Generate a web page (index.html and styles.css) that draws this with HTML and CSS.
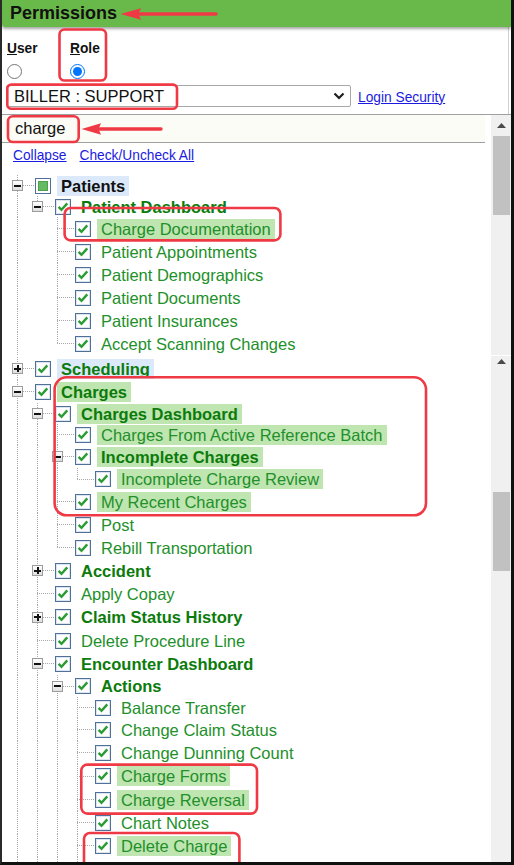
FILE: index.html
```html
<!DOCTYPE html>
<html lang="en">
<head>
<meta charset="utf-8">
<title>Permissions</title>
<link rel="stylesheet" href="styles.css">
</head>
<body>
<svg class="defs" width="0" height="0" aria-hidden="true">
  <defs>
    <symbol id="cb" viewBox="0 0 16 16">
      <rect x=".5" y=".5" width="15" height="15" fill="#fff" stroke="#4f7099"/>
      <rect x="1.5" y="1.5" width="13" height="13" fill="none" stroke="#dbe4ef"/>
      <path d="M3.6 7.8l2.9 3 5.8-6.4" fill="none" stroke="#2a9c33" stroke-width="2.4"/>
    </symbol>
    <symbol id="cbp" viewBox="0 0 16 16">
      <rect x=".5" y=".5" width="15" height="15" fill="#fff" stroke="#4f7099"/>
      <rect x="3.5" y="3.5" width="9" height="9" fill="#64bb62" stroke="#4f9f4f"/>
    </symbol>
  </defs>
</svg>

<div class="frame">
  <header class="title">Permissions</header>

  <div class="top">
    <div class="modes">
      <label class="mode"><span><u>U</u>ser</span><input type="radio" name="mode"></label>
      <label class="mode"><span><u>R</u>ole</span><input type="radio" name="mode" checked></label>
    </div>
    <div class="role-row">
      <div class="select"><span>BILLER : SUPPORT</span><svg class="chev" viewBox="0 0 12 8"><path d="M1.5 1.5L6 6l4.5-4.5" fill="none" stroke="#1e1e1e" stroke-width="2.2"/></svg></div>
      <a class="link login" href="#">Login Security</a>
    </div>
  </div>

  <section class="panel panel-top">
    <div class="panel-body">
      <div class="search">charge</div>
      <div class="links"><a class="link" href="#">Collapse</a><a class="link" href="#">Check/Uncheck All</a></div>
      <ul class="tree">
        <li class="row h21"><span class="c tee"><span class="exp minus"></span></span><svg class="cb"><use href="#cbp"/></svg><span class="lbl b root blue">Patients</span></li>
        <li class="row h21"><span class="g v"></span><span class="c end"><span class="exp minus"></span></span><svg class="cb"><use href="#cb"/></svg><span class="lbl b">Patient Dashboard</span></li>
        <li class="row"><span class="g v"></span><span class="g"></span><span class="c tee"></span><svg class="cb"><use href="#cb"/></svg><span class="lbl hl">Charge Documentation</span></li>
        <li class="row"><span class="g v"></span><span class="g"></span><span class="c tee"></span><svg class="cb"><use href="#cb"/></svg><span class="lbl">Patient Appointments</span></li>
        <li class="row"><span class="g v"></span><span class="g"></span><span class="c tee"></span><svg class="cb"><use href="#cb"/></svg><span class="lbl">Patient Demographics</span></li>
        <li class="row"><span class="g v"></span><span class="g"></span><span class="c tee"></span><svg class="cb"><use href="#cb"/></svg><span class="lbl">Patient Documents</span></li>
        <li class="row"><span class="g v"></span><span class="g"></span><span class="c tee"></span><svg class="cb"><use href="#cb"/></svg><span class="lbl">Patient Insurances</span></li>
        <li class="row"><span class="g v"></span><span class="g"></span><span class="c end"></span><svg class="cb"><use href="#cb"/></svg><span class="lbl">Accept Scanning Changes</span></li>
      </ul>
    </div>
    <div class="scrollbar">
      <div class="sb-btn"><svg class="sb-arrow" viewBox="0 0 9 5"><path d="M0 5L4.5 0 9 5z"/></svg></div>
      <div class="sb-thumb"></div>
    </div>
  </section>

  <section class="panel panel-bottom">
    <div class="panel-body">
      <ul class="tree">
        <li class="row"><span class="c tee"><span class="exp plus"></span></span><svg class="cb"><use href="#cb"/></svg><span class="lbl b blue">Scheduling</span></li>
        <li class="row"><span class="c tee"><span class="exp minus"></span></span><svg class="cb"><use href="#cb"/></svg><span class="lbl b hl">Charges</span></li>
        <li class="row h21"><span class="g v"></span><span class="c tee"><span class="exp minus"></span></span><svg class="cb"><use href="#cb"/></svg><span class="lbl b hl">Charges Dashboard</span></li>
        <li class="row h21"><span class="g v"></span><span class="g v"></span><span class="c tee"></span><svg class="cb"><use href="#cb"/></svg><span class="lbl hl">Charges From Active Reference Batch</span></li>
        <li class="row"><span class="g v"></span><span class="g v"></span><span class="c tee"><span class="exp minus"></span></span><svg class="cb"><use href="#cb"/></svg><span class="lbl b hl">Incomplete Charges</span></li>
        <li class="row h22"><span class="g v"></span><span class="g v"></span><span class="g v"></span><span class="c end"></span><svg class="cb"><use href="#cb"/></svg><span class="lbl hl">Incomplete Charge Review</span></li>
        <li class="row"><span class="g v"></span><span class="g v"></span><span class="c tee"></span><svg class="cb"><use href="#cb"/></svg><span class="lbl hl">My Recent Charges</span></li>
        <li class="row"><span class="g v"></span><span class="g v"></span><span class="c tee"></span><svg class="cb"><use href="#cb"/></svg><span class="lbl">Post</span></li>
        <li class="row"><span class="g v"></span><span class="g v"></span><span class="c end"></span><svg class="cb"><use href="#cb"/></svg><span class="lbl">Rebill Transportation</span></li>
        <li class="row"><span class="g v"></span><span class="c tee"><span class="exp plus"></span></span><svg class="cb"><use href="#cb"/></svg><span class="lbl b">Accident</span></li>
        <li class="row"><span class="g v"></span><span class="c tee"></span><svg class="cb"><use href="#cb"/></svg><span class="lbl">Apply Copay</span></li>
        <li class="row h24"><span class="g v"></span><span class="c tee"><span class="exp plus"></span></span><svg class="cb"><use href="#cb"/></svg><span class="lbl b">Claim Status History</span></li>
        <li class="row"><span class="g v"></span><span class="c tee"></span><svg class="cb"><use href="#cb"/></svg><span class="lbl">Delete Procedure Line</span></li>
        <li class="row"><span class="g v"></span><span class="c tee"><span class="exp minus"></span></span><svg class="cb"><use href="#cb"/></svg><span class="lbl b">Encounter Dashboard</span></li>
        <li class="row h22"><span class="g v"></span><span class="g v"></span><span class="c tee"><span class="exp minus"></span></span><svg class="cb"><use href="#cb"/></svg><span class="lbl b">Actions</span></li>
        <li class="row h21"><span class="g v"></span><span class="g v"></span><span class="g v"></span><span class="c tee"></span><svg class="cb"><use href="#cb"/></svg><span class="lbl">Balance Transfer</span></li>
        <li class="row"><span class="g v"></span><span class="g v"></span><span class="g v"></span><span class="c tee"></span><svg class="cb"><use href="#cb"/></svg><span class="lbl">Change Claim Status</span></li>
        <li class="row"><span class="g v"></span><span class="g v"></span><span class="g v"></span><span class="c tee"></span><svg class="cb"><use href="#cb"/></svg><span class="lbl">Change Dunning Count</span></li>
        <li class="row h24"><span class="g v"></span><span class="g v"></span><span class="g v"></span><span class="c tee"></span><svg class="cb"><use href="#cb"/></svg><span class="lbl hl">Charge Forms</span></li>
        <li class="row"><span class="g v"></span><span class="g v"></span><span class="g v"></span><span class="c tee"></span><svg class="cb"><use href="#cb"/></svg><span class="lbl hl">Charge Reversal</span></li>
        <li class="row"><span class="g v"></span><span class="g v"></span><span class="g v"></span><span class="c tee"></span><svg class="cb"><use href="#cb"/></svg><span class="lbl">Chart Notes</span></li>
        <li class="row"><span class="g v"></span><span class="g v"></span><span class="g v"></span><span class="c tee"></span><svg class="cb"><use href="#cb"/></svg><span class="lbl hl">Delete Charge</span></li>
        <li class="row"><span class="g v"></span><span class="g v"></span><span class="g v"></span><span class="g v"></span></li>
      </ul>
    </div>
    <div class="scrollbar scrollbar-bottom">
      <div class="sb-btn cut"><svg class="sb-arrow" viewBox="0 0 9 5"><path d="M0 5L4.5 0 9 5z"/></svg></div>
      <div class="sb-thumb low"></div>
    </div>
  </section>

  <svg class="annotations" viewBox="0 0 514 865" aria-hidden="true">
    <g fill="none" stroke="#ef3a45" stroke-width="2.6">
      <rect x="59.5" y="29.5" width="46.5" height="51" rx="5"/>
      <rect x="7.3" y="84.6" width="169.7" height="24.2" rx="4"/>
      <rect x="8" y="116.3" width="70.7" height="25.7" rx="5"/>
      <rect x="64.6" y="208" width="215.8" height="32.4" rx="6"/>
      <rect x="54.6" y="377.3" width="371.4" height="138" rx="12"/>
      <rect x="81.3" y="764.6" width="175.7" height="49" rx="6"/>
      <rect x="84" y="833" width="155.4" height="34" rx="6"/>
      <line x1="137" y1="14" x2="216" y2="14" stroke-width="3.4" stroke-linecap="round"/>
      <line x1="97" y1="129" x2="161" y2="129" stroke-width="3.4" stroke-linecap="round"/>
    </g>
    <g fill="#ef3a45">
      <path d="M120.5 14L141 8.3 138.5 14 141 19.7z"/>
      <path d="M81.5 129L101 123.3 98.5 129 101 134.7z"/>
    </g>
  </svg>
</div>
</body>
</html>
```

FILE: styles.css
```css
* { box-sizing: border-box; }

html, body {
  margin: 0;
  background: #fff;
}

body {
  font-family: "Liberation Sans", Arial, sans-serif;
  color: #111;
}

.defs {
  position: absolute;
  width: 0;
  height: 0;
  overflow: hidden;
}

.frame {
  position: relative;
  width: 514px;
  height: 865px;
  border-left: 2px solid #2a2a2a;
  border-right: 3px solid #111;
  border-bottom: 3px solid #111;
  overflow: hidden;
  display: flex;
  flex-direction: column;
  background: #fff;
}

.title {
  position: relative;
  z-index: 1;
  flex: none;
  height: 27px;
  line-height: 27px;
  padding-left: 8px;
  background: #69b94a;
  font-size: 18px;
  font-weight: bold;
  color: #111;
  border-bottom-left-radius: 3px;
  box-shadow: 0 2px 3px rgba(0, 0, 0, 0.35);
}

.top {
  flex: none;
  margin-right: 2px;
  border-right: 1px solid #cfcfcf;
}

.modes {
  display: grid;
  grid-template-columns: 63px auto;
  justify-content: start;
  padding: 14px 0 0 5px;
}

.mode {
  display: flex;
  flex-direction: column;
  align-items: flex-start;
  font-size: 13.75px;
  font-weight: bold;
  line-height: 16px;
  color: #111;
}

.mode input {
  width: 15px;
  height: 15px;
  margin: 7px 0 0;
}

.role-row {
  display: flex;
  align-items: center;
  height: 22px;
  margin: 6px 0 7px;
  padding-left: 4px;
}

.select {
  width: 345px;
  height: 22px;
  display: flex;
  align-items: center;
  justify-content: space-between;
  padding: 0 5px 0 7px;
  border: 1px solid #a8a8a8;
  border-radius: 2px;
  font-size: 16.5px;
  color: #111;
}

.chev {
  width: 12px;
  height: 8px;
}

.link {
  color: #1b1be0;
  text-decoration: underline;
  font-size: 13.75px;
  line-height: 16px;
}

.login {
  margin-left: 7px;
  margin-top: 3px;
}

.panel {
  display: flex;
}

.panel-top {
  flex: none;
  height: 241px;
  border-top: 1px solid #a0a0a0;
}

.panel-bottom {
  flex: 1;
  min-height: 0;
}

.panel-body {
  flex: 1;
  min-width: 0;
  overflow: hidden;
}

.search {
  height: 28px;
  margin-right: 6px;
  padding-left: 13px;
  background: #fcfcf6;
  border-bottom: 1px solid #a0a0a0;
  font-size: 16.5px;
  line-height: 27px;
  color: #111;
}

.links {
  display: flex;
  gap: 13px;
  padding: 5px 0 0 11px;
}

.tree {
  list-style: none;
  margin: 0;
  padding: 11px 0 0 5px;
}

.panel-bottom .tree {
  padding-top: 2px;
}

.row {
  display: flex;
  align-items: stretch;
  height: 23px;
}

.row.h21 { height: 21px; }
.row.h22 { height: 22px; }
.row.h24 { height: 24px; }

.g {
  flex: none;
  width: 20px;
}

.g.v {
  background-image: repeating-linear-gradient(to bottom, #a9a9a9 0 1px, transparent 1px 2px);
  background-size: 1px 100%;
  background-position: 10px 0;
  background-repeat: no-repeat;
}

.c {
  flex: none;
  width: 28px;
  display: flex;
  align-items: center;
  background-repeat: no-repeat;
}

.c.tee {
  background-image:
    repeating-linear-gradient(to bottom, #a9a9a9 0 1px, transparent 1px 2px),
    repeating-linear-gradient(to right, #a9a9a9 0 1px, transparent 1px 2px);
  background-size: 1px 100%, 18px 1px;
  background-position: 10px 0, 10px 50%;
}

.c.end {
  background-image:
    repeating-linear-gradient(to bottom, #a9a9a9 0 1px, transparent 1px 2px),
    repeating-linear-gradient(to right, #a9a9a9 0 1px, transparent 1px 2px);
  background-size: 1px 50%, 18px 1px;
  background-position: 10px 0, 10px 50%;
}

.exp {
  width: 11px;
  height: 11px;
  margin-left: 5px;
  border: 1px solid #9c9c9c;
  background-repeat: no-repeat;
}

.exp.minus {
  background-image:
    linear-gradient(#111, #111),
    linear-gradient(#ffffff, #dedede);
  background-size: 7px 2px, 100% 100%;
  background-position: 1px 3.5px, 0 0;
}

.exp.plus {
  background-image:
    linear-gradient(#111, #111),
    linear-gradient(#111, #111),
    linear-gradient(#ffffff, #dedede);
  background-size: 7px 2px, 2px 7px, 100% 100%;
  background-position: 1px 3.5px, 3.5px 1px, 0 0;
}

.cb {
  flex: none;
  align-self: center;
  width: 16px;
  height: 16px;
}

.lbl {
  align-self: center;
  margin-left: 6px;
  padding: 0 4px;
  line-height: 20px;
  font-size: 16.5px;
  color: #22902a;
  white-space: nowrap;
}

.lbl.b {
  font-weight: bold;
  color: #0b7b0b;
}

.lbl.root { color: #111; }
.lbl.hl { background: #bfe5b1; }
.lbl.blue { background: #dbe9fa; }

.scrollbar {
  flex: none;
  width: 20px;
  display: flex;
  flex-direction: column;
  background: #f0f0f0;
}

.scrollbar-bottom {
  border-top: 1px solid #fff;
}

.sb-btn {
  flex: none;
  height: 21px;
  display: flex;
  align-items: center;
  justify-content: center;
}

.sb-btn.cut {
  height: 10px;
  align-items: flex-start;
  padding-top: 3px;
}

.sb-arrow {
  width: 9px;
  height: 5px;
  fill: #4a4a4a;
}

.sb-thumb {
  flex: none;
  height: 79px;
  margin: 0 1px 0 2px;
  background: #c1c1c1;
}

.sb-thumb.low {
  margin-top: 126px;
}

.annotations {
  position: absolute;
  left: -2px;
  top: 0;
  width: 514px;
  height: 865px;
  pointer-events: none;
  z-index: 2;
}
```
